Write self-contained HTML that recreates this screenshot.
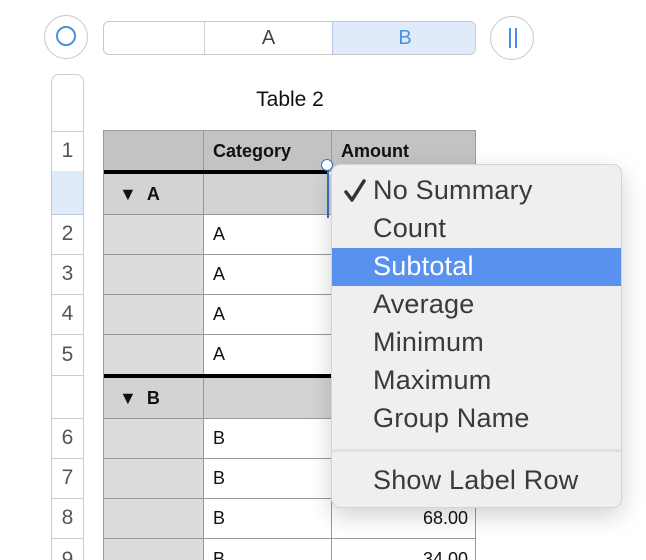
<!DOCTYPE html>
<html style="overflow:hidden;height:560px"><head><meta charset="utf-8"><style>
body{margin:0;width:646px;height:560px;background:#fff;position:relative;overflow:hidden;font-family:"Liberation Sans",sans-serif}
.a{position:absolute;box-sizing:border-box}
.circ{width:44px;height:44px;border:1.5px solid #c8c8c8;border-radius:50%;background:#fff}
.rn{left:51px;width:33px;border-left:1px solid #ccc;border-right:1px solid #ccc;border-bottom:1px solid #ccc;text-align:center;font-size:21px;color:#555;display:flex;align-items:center;justify-content:center}
.c{border-right:1px solid #999;border-bottom:1px solid #999;font-size:18px;color:#111;display:flex;align-items:center;padding-left:9px}
.m{left:373px;font-size:27px;color:#3a3a3a;letter-spacing:.2px;line-height:38px}
</style></head><body>
<div class="a circ" style="left:44px;top:15px"></div>
<div class="a" style="left:56px;top:26px;width:20px;height:20px;border:2px solid #4a90e2;border-radius:50%"></div>
<div class="a" style="left:103px;top:21px;width:373px;height:34px;border:1px solid #c8c8c8;border-radius:6px;overflow:hidden;background:#fff">
 <div class="a" style="left:100px;top:0;width:1px;height:34px;background:#d0d0d0"></div>
 <div class="a" style="left:101px;top:0;width:127px;height:32px;font-size:20px;color:#444;text-align:center;line-height:33px">A</div>
 <div class="a" style="left:228px;top:0;width:145px;height:32px;background:#dfeafb;border-left:1px solid #b8c6dc;font-size:20px;color:#4a90e2;text-align:center;line-height:33px">B</div>
</div>
<div class="a circ" style="left:490px;top:16px"></div>
<div class="a" style="left:509px;top:28px;width:2px;height:20px;background:#4a90e2"></div>
<div class="a" style="left:515px;top:28px;width:2px;height:20px;background:#4a90e2"></div>
<div class="a" style="left:51px;top:74px;width:33px;height:58px;border:1px solid #ccc;border-radius:8px 8px 0 0"></div>
<div class="a rn" style="top:131px;height:41px">1</div>
<div class="a rn" style="top:171px;height:44px;background:#dfeafb;border-color:#b8c6dc"></div>
<div class="a rn" style="top:214px;height:41px">2</div>
<div class="a rn" style="top:254px;height:41px">3</div>
<div class="a rn" style="top:294px;height:41px">4</div>
<div class="a rn" style="top:334px;height:42px">5</div>
<div class="a rn" style="top:375px;height:44px"></div>
<div class="a rn" style="top:418px;height:41px">6</div>
<div class="a rn" style="top:458px;height:41px">7</div>
<div class="a rn" style="top:498px;height:41px">8</div>
<div class="a rn" style="top:538px;height:41px;align-items:flex-start;padding-top:10px">9</div>
<div class="a" style="left:104px;top:88px;width:372px;text-align:center;font-size:21px;color:#111">Table 2</div>
<div class="a" style="left:103px;top:130px;width:373px;height:1px;background:#999"></div>
<div class="a" style="left:103px;top:130px;width:1px;height:440px;background:#999"></div>
<div class="a c" style="left:104px;top:131px;width:100px;height:41px;background:#c2c3c3"></div>
<div class="a c" style="left:204px;top:131px;width:128px;height:41px;background:#c2c3c3;font-weight:bold">Category</div>
<div class="a c" style="left:332px;top:131px;width:144px;height:41px;background:#c2c3c3;font-weight:bold">Amount</div>
<div class="a" style="left:104px;top:170px;width:225px;height:4px;background:#000"></div>
<div class="a c" style="left:104px;top:174px;width:100px;height:41px;background:#d3d3d3;font-weight:bold;padding-left:15px">▼&nbsp;&nbsp;A</div>
<div class="a c" style="left:204px;top:174px;width:128px;height:41px;background:#d3d3d3"></div>
<div class="a c" style="left:104px;top:215px;width:100px;height:40px;background:#dcdcdc"></div><div class="a c" style="left:204px;top:215px;width:128px;height:40px">A</div>
<div class="a c" style="left:104px;top:255px;width:100px;height:40px;background:#dcdcdc"></div><div class="a c" style="left:204px;top:255px;width:128px;height:40px">A</div>
<div class="a c" style="left:104px;top:295px;width:100px;height:40px;background:#dcdcdc"></div><div class="a c" style="left:204px;top:295px;width:128px;height:40px">A</div>
<div class="a c" style="left:104px;top:335px;width:100px;height:40px;background:#dcdcdc"></div><div class="a c" style="left:204px;top:335px;width:128px;height:40px">A</div>
<div class="a" style="left:104px;top:374px;width:228px;height:4px;background:#000"></div>
<div class="a c" style="left:104px;top:378px;width:100px;height:41px;background:#d3d3d3;font-weight:bold;padding-left:15px">▼&nbsp;&nbsp;B</div>
<div class="a c" style="left:204px;top:378px;width:128px;height:41px;background:#d3d3d3"></div>
<div class="a c" style="left:104px;top:419px;width:100px;height:40px;background:#dcdcdc"></div><div class="a c" style="left:204px;top:419px;width:128px;height:40px">B</div>
<div class="a c" style="left:104px;top:459px;width:100px;height:40px;background:#dcdcdc"></div><div class="a c" style="left:204px;top:459px;width:128px;height:40px">B</div>
<div class="a c" style="left:104px;top:499px;width:100px;height:40px;background:#dcdcdc"></div><div class="a c" style="left:204px;top:499px;width:128px;height:40px">B</div>
<div class="a c" style="left:332px;top:499px;width:144px;height:40px;justify-content:flex-end;padding-right:7px">68.00</div>
<div class="a c" style="left:104px;top:539px;width:100px;height:40px;background:#dcdcdc"></div><div class="a c" style="left:204px;top:539px;width:128px;height:40px;align-items:flex-start;padding-top:10px">B</div>
<div class="a c" style="left:332px;top:539px;width:144px;height:40px;justify-content:flex-end;padding-right:7px;align-items:flex-start;padding-top:10px">34.00</div>
<div class="a" style="left:327px;top:166px;width:2px;height:52px;background:#3a6fc2"></div>
<div class="a" style="left:321px;top:159px;width:12px;height:12px;border:1.5px solid #3a6fc2;border-radius:50%;background:#fff"></div>
<div class="a" style="left:331px;top:164px;width:291px;height:344px;background:#efefef;border:1px solid #d4d4d4;border-radius:9px;box-shadow:0 8px 24px rgba(0,0,0,.18)"></div>
<div class="a" style="left:332px;top:248px;width:289px;height:38px;background:#5991ee"></div>
<div class="a" style="left:332px;top:449px;width:289px;height:3px;background:#e0e0e0"></div>
<svg class="a" style="left:343px;top:178px" width="24" height="26" viewBox="0 0 24 26"><path d="M3 14 L9 22 L21 3" fill="none" stroke="#333" stroke-width="3.5" stroke-linecap="round" stroke-linejoin="round"/></svg>
<div class="a m" style="top:171px">No Summary</div>
<div class="a m" style="top:209px">Count</div>
<div class="a m" style="top:247px;color:#fff">Subtotal</div>
<div class="a m" style="top:285px">Average</div>
<div class="a m" style="top:323px">Minimum</div>
<div class="a m" style="top:361px">Maximum</div>
<div class="a m" style="top:399px">Group Name</div>
<div class="a m" style="top:461px">Show Label Row</div>
</body></html>
